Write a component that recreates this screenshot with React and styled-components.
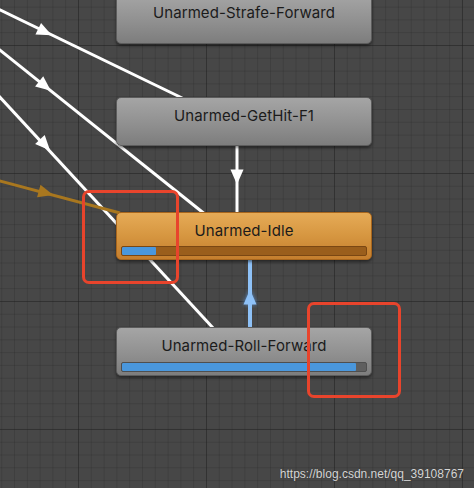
import React from "react";
import styled, { createGlobalStyle } from "styled-components";

const GlobalStyle = createGlobalStyle`
  html, body {
    margin: 0;
    padding: 0;
    background: #474747;
    overflow: hidden;
  }
`;

const Canvas = styled.div`
  position: relative;
  width: 474px;
  height: 488px;
  overflow: hidden;
  background-color: #474747;
  background-image:
    linear-gradient(to right, rgba(30, 30, 30, 0.4) 1px, transparent 1px),
    linear-gradient(to bottom, rgba(30, 30, 30, 0.4) 1px, transparent 1px),
    linear-gradient(to right, rgba(30, 30, 30, 0.2) 1px, transparent 1px),
    linear-gradient(to bottom, rgba(30, 30, 30, 0.2) 1px, transparent 1px);
  background-size: 128px 128px, 128px 128px, 12.8px 12.8px, 12.8px 12.8px;
  background-position: 78px 45px, 78px 45px, 78px 45px, 78px 45px;
  font-family: "Inter", "DejaVu Sans", sans-serif;
`;

const Wires = styled.svg`
  position: absolute;
  left: 0;
  top: 0;
`;

const Node = styled.div`
  position: absolute;
  left: ${(p) => p.$x}px;
  top: ${(p) => p.$y}px;
  width: 256px;
  height: ${(p) => p.$h || 48}px;
  box-sizing: border-box;
  display: flex;
  flex-direction: column;
  justify-content: space-between;
  padding: 8px 4px 3px;
  border-radius: 5px;
  border: 1px solid ${(p) => (p.$active ? "#a8661d" : "#5c5c5c")};
  background: ${(p) =>
    p.$active
      ? "linear-gradient(to bottom, #e6ab57 0%, #d69640 50%, #c47e2e 100%)"
      : "linear-gradient(to bottom, #a5a5a5 0%, #909090 55%, #7d7d7d 100%)"};
  box-shadow: 0 2px 3px rgba(0, 0, 0, 0.45);
`;

const Label = styled.div`
  text-align: center;
  font-size: 15px;
  line-height: 20px;
  color: #1b1b1b;
  letter-spacing: 0.1px;
`;

const Track = styled.div`
  height: 10px;
  box-sizing: border-box;
  border-radius: 2px;
  border: 1px solid ${(p) => (p.$active ? "#7a4713" : "#4f4f4f")};
  background: ${(p) => (p.$active ? "#9a5e1c" : "#5f5f5f")};
  overflow: hidden;
`;

const Fill = styled.div`
  height: 100%;
  background: #4a97dc;
  border-radius: 1px;
`;

const Mark = styled.div`
  position: absolute;
  left: ${(p) => p.$x}px;
  top: ${(p) => p.$y}px;
  width: ${(p) => p.$w}px;
  height: ${(p) => p.$h}px;
  box-sizing: border-box;
  border: 3px solid #e8442c;
  border-radius: 7px;
`;

const Watermark = styled.div`
  position: absolute;
  right: 10px;
  bottom: 7px;
  font-family: "Liberation Sans", Arial, sans-serif;
  font-size: 12px;
  color: #d6d6d6;
  text-shadow: 0 0 1px rgba(0, 0, 0, 0.4);
`;

// triangle sitting on a wire at (cx, cy), pointing along x1,y1 -> x2,y2
function arrow(x1, y1, x2, y2, cx, cy, len = 15, w = 13) {
  const dx = x2 - x1;
  const dy = y2 - y1;
  const d = Math.hypot(dx, dy);
  const ux = dx / d;
  const uy = dy / d;
  const tip = [cx + (ux * len) / 2, cy + (uy * len) / 2];
  const bx = cx - (ux * len) / 2;
  const by = cy - (uy * len) / 2;
  const a = [bx - (uy * w) / 2, by + (ux * w) / 2];
  const b = [bx + (uy * w) / 2, by - (ux * w) / 2];
  return [tip, a, b].map((p) => p.join(",")).join(" ");
}

const wires = [
  { x1: -4, y1: 8, x2: 240, y2: 126, ax: 45, ay: 32 },
  { x1: -4, y1: 47, x2: 206, y2: 215, ax: 45, ay: 86 },
  { x1: -4, y1: 93, x2: 214, y2: 329, ax: 45, ay: 145 },
];

const nodes = [
  { name: "Unarmed-Strafe-Forward", x: 116, y: -6, h: 50 },
  { name: "Unarmed-GetHit-F1", x: 116, y: 97, h: 49 },
  { name: "Unarmed-Idle", x: 116, y: 212, active: true, progress: 14 },
  { name: "Unarmed-Roll-Forward", x: 116, y: 327, h: 49, progress: 96 },
];

export default function App() {
  return (
    <Canvas>
      <GlobalStyle />
      <Wires width="474" height="488">
        <defs>
          <filter id="glow" x="-80%" y="-20%" width="260%" height="140%">
            <feGaussianBlur stdDeviation="2.2" />
          </filter>
        </defs>
        {wires.map((w, i) => (
          <g key={i} fill="#ffffff">
            <line x1={w.x1} y1={w.y1} x2={w.x2} y2={w.y2} stroke="#ffffff" strokeWidth="3" />
            <polygon points={arrow(w.x1, w.y1, w.x2, w.y2, w.ax, w.ay)} />
          </g>
        ))}
        <g fill="#a8771f">
          <line x1="-4" y1="180" x2="120" y2="213" stroke="#a8771f" strokeWidth="3" />
          <polygon points={arrow(0, 181, 118, 213, 46, 193)} />
        </g>
        <g fill="#ffffff">
          <line x1="237" y1="146" x2="237" y2="212" stroke="#ffffff" strokeWidth="3" />
          <polygon points={arrow(237, 146, 237, 212, 237, 177)} />
        </g>
        <g>
          <line x1="250" y1="327" x2="250" y2="260" stroke="#5f9ee8" strokeWidth="9" filter="url(#glow)" opacity="0.85" />
          <polygon points={arrow(250, 327, 250, 260, 250, 297)} fill="#5f9ee8" filter="url(#glow)" opacity="0.85" />
          <line x1="250" y1="327" x2="250" y2="260" stroke="#8ec1f7" strokeWidth="4" />
          <polygon points={arrow(250, 327, 250, 260, 250, 297)} fill="#8ec1f7" />
        </g>
      </Wires>

      {nodes.map((n) => (
        <Node key={n.name} $x={n.x} $y={n.y} $h={n.h} $active={n.active}>
          <Label>{n.name}</Label>
          {n.progress != null && (
            <Track $active={n.active}>
              <Fill style={{ width: `${n.progress}%` }} />
            </Track>
          )}
        </Node>
      ))}

      <Mark $x={82} $y={190} $w={97} $h={94} />
      <Mark $x={307} $y={302} $w={94} $h={96} />

      <Watermark>https://blog.csdn.net/qq_39108767</Watermark>
    </Canvas>
  );
}
